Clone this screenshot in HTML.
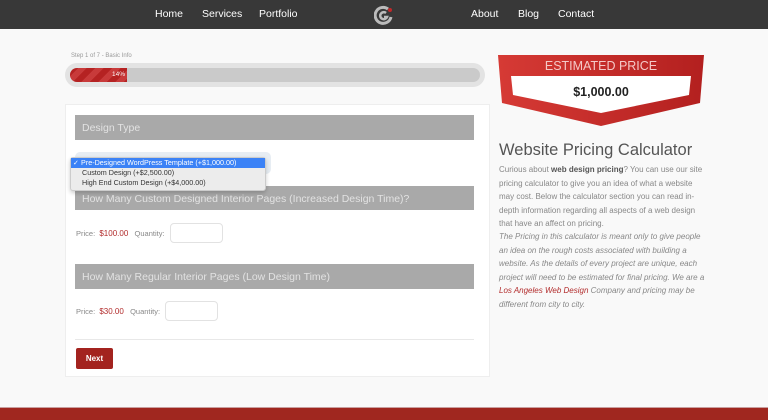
<!DOCTYPE html>
<html><head><meta charset="utf-8"><style>
*{margin:0;padding:0;box-sizing:border-box}
body{width:768px;height:420px;overflow:hidden;background:#f9f9f9;font-family:"Liberation Sans",sans-serif;position:relative}
.nav{position:absolute;left:0;top:0;width:768px;height:29px;background:#383838;color:#fff;font-size:10.5px}
.nav span{position:absolute;top:8px}
.abs{position:absolute}
.bar{position:absolute;left:75px;width:399px;height:25px;background:#a9a9a9;color:#e2e2e2;font-size:10.5px;padding:7px 0 0 7px;white-space:nowrap}
.price{position:absolute;left:76px;font-size:7.5px;color:#888}
.price b{color:#b22c2c;font-weight:normal;font-size:8px}
.qty{position:absolute;width:53px;height:20px;background:#fff;border:1px solid #e2e2e2;border-radius:4px}
p{font-size:8px;line-height:13.5px;color:#888}
</style></head><body>
<div class="nav">
<span style="left:155px">Home</span><span style="left:202px">Services</span><span style="left:259px">Portfolio</span>
<span style="left:471px">About</span><span style="left:518px">Blog</span><span style="left:558px">Contact</span>
<svg class="abs" style="left:374px;top:5px" width="20" height="20" viewBox="0 0 20 20"><path d="M14 4 A8 8 0 1 0 17 12" fill="none" stroke="#bbb" stroke-width="3"/><path d="M12 8 A3.5 3.5 0 1 0 13 12 L10 12" fill="none" stroke="#bbb" stroke-width="2.5"/><circle cx="16" cy="5" r="2" fill="#c0282a"/></svg>
</div>
<div class="abs" style="left:71px;top:53px;font-size:6px;color:#999">Step 1 of 7 - Basic Info</div>
<div class="abs" style="left:65px;top:63px;width:420px;height:24px;border-radius:12px;background:#e3e3e3"></div>
<div class="abs" style="left:70px;top:68px;width:410px;height:14px;border-radius:7px;background:#cacaca;overflow:hidden"><div style="width:57px;height:14px;background:repeating-linear-gradient(135deg,#b52222 0 6px,#c83a3a 6px 12px);color:#fff;font-size:6.5px;text-align:right;padding:3px 2px 0 0">14%</div></div>
<div class="abs" style="left:65px;top:104px;width:425px;height:273px;background:#fff;border:1px solid #eee"></div>
<div class="bar" style="top:115px">Design Type</div>
<div class="bar" style="top:186px;height:24px">How Many Custom Designed Interior Pages (Increased Design Time)?</div>
<div class="abs" style="left:75px;top:152px;width:196px;height:22px;background:#e7edf3;border-radius:5px"></div>
<div class="abs" style="left:70px;top:157px;width:196px;height:34px;background:#ececec;border:1px solid #ccc;border-radius:3px;box-shadow:0 2px 4px rgba(0,0,0,.2);font-size:7.2px;color:#333;line-height:10px;z-index:5">
<div style="background:#3b82f6;color:#fff;padding-left:2px">✓ Pre-Designed WordPress Template (+$1,000.00)</div>
<div style="padding-left:11px">Custom Design (+$2,500.00)</div>
<div style="padding-left:11px">High End Custom Design (+$4,000.00)</div></div>
<div class="price" style="top:229px">Price: &nbsp;<b>$100.00</b> &nbsp; Quantity:</div>
<div class="qty" style="left:170px;top:223px"></div>
<div class="bar" style="top:264px">How Many Regular Interior Pages (Low Design Time)</div>
<div class="price" style="top:307px">Price: &nbsp;<b>$30.00</b> &nbsp; Quantity:</div>
<div class="qty" style="left:165px;top:301px"></div>
<div class="abs" style="left:75px;top:339px;width:399px;height:1px;background:#e8e8e8"></div>
<div class="abs" style="left:76px;top:348px;width:37px;height:21px;background:#a3231f;border-radius:2px;color:#fff;font-size:8px;font-weight:bold;text-align:center;line-height:21px">Next</div>
<svg class="abs" style="left:498px;top:55px" width="206" height="72" viewBox="0 0 206 72"><defs><linearGradient id="g" x1="0" x2="1"><stop offset="0" stop-color="#d63a35"/><stop offset="1" stop-color="#b3201f"/></linearGradient></defs><polygon points="0,0 206,0 202,48 103,71 4,48" fill="url(#g)"/><polygon points="13,21 193,21 191,40 103,58 15,40" fill="#fff"/></svg>
<div class="abs" style="left:498px;top:59px;width:206px;text-align:center;color:#f4c9c7;font-size:12.5px">ESTIMATED PRICE</div>
<div class="abs" style="left:498px;top:85px;width:206px;text-align:center;color:#222;font-size:12.5px;font-weight:bold">$1,000.00</div>
<div class="abs" style="left:499px;top:141px;font-size:16.5px;color:#555">Website Pricing Calculator</div>
<p class="abs" style="left:499px;top:163px;width:210px">Curious about <b style="color:#555">web design pricing</b>? You can use our site pricing calculator to give you an idea of what a website may cost. Below the calculator section you can read in-depth information regarding all aspects of a web design that have an affect on pricing.</p>
<p class="abs" style="left:499px;top:230px;width:212px;font-style:italic">The Pricing in this calculator is meant only to give people an idea on the rough costs associated with building a website. As the details of every project are unique, each project will need to be estimated for final pricing. We are a <span style="color:#b22c2c">Los Angeles Web Design</span> Company and pricing may be different from city to city.</p>
<div class="abs" style="left:0;top:407px;width:768px;height:13px;background:#a0271f;border-top:1px solid #c9a0a0"></div>
</body></html>
